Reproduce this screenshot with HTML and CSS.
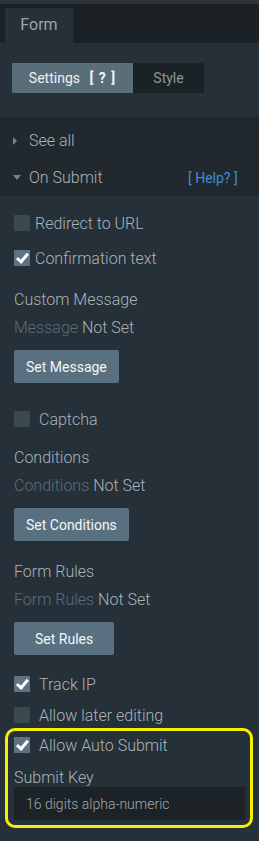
FILE: index.html
```html
<!DOCTYPE HTML>
<html lang="en">
  <head>
    <meta charset="UTF-8">
    <title>Form settings</title>
    <link rel="stylesheet" href="styles.css">
  </head>
  <body>
    <div class="barra-top"></div>
    <div class="tabs">
        <div class="tab">Form</div>
    </div>
    <div class="cabecera">
        <div class="segmento">
            <div class="seg seg-activo">Settings <b class="ayuda">[ ? ]</b></div>
            <div class="seg">Style</div>
        </div>
    </div>
    <div class="arbol">
        <div class="nodo"><span class="flecha-der"></span>See all</div>
        <div class="nodo"><span class="flecha-abajo"></span>On Submit <a class="help">[ Help? ]</a></div>
    </div>
    <div class="contenido">
        <div class="check primero"><span class="caja"></span>Redirect to URL</div>
        <div class="check angosto"><span class="caja marcada"></span>Confirmation text</div>

        <div class="etiqueta sep-1">Custom Message</div>
        <div class="etiqueta"><span class="tenue">Message</span> Not Set</div>
        <button class="boton">Set Message</button>

        <div class="check ancho sep-2"><span class="caja"></span>Captcha</div>

        <div class="etiqueta sep-3">Conditions</div>
        <div class="etiqueta"><span class="tenue">Conditions</span> Not Set</div>
        <button class="boton">Set Conditions</button>

        <div class="etiqueta sep-4">Form Rules</div>
        <div class="etiqueta"><span class="tenue">Form Rules</span> Not Set</div>
        <button class="boton boton-rules">Set Rules</button>

        <div class="check ancho sep-5"><span class="caja marcada"></span>Track IP</div>
        <div class="check ancho"><span class="caja"></span>Allow later editing</div>

        <div class="resaltado">
            <div class="check ancho alto-28"><span class="caja marcada"></span>Allow Auto Submit</div>
            <div class="etiqueta-key">Submit Key</div>
            <input type="text" class="entrada" value="16 digits alpha-numeric">
        </div>
    </div>
  </body>
</html>
```

FILE: styles.css
```css
html, body {
    padding: 0;
    margin: 0;
    border: 0;
    width: 100%;
}

body {
    background-color: #263038;
    font-family: Roboto, "Liberation Sans", sans-serif;
    font-weight: 300;
    color: #aab4ba;
    font-size: 16px;
}

.barra-top {
    height: 4px;
    background-color: #2b343a;
}

.tabs {
    height: 39px;
    background-color: #1b2125;
    display: flex;
    align-items: flex-end;
    padding-left: 5px;
}

.tab {
    width: 68px;
    height: 35px;
    background-color: #263038;
    color: #9aa5ab;
    font-size: 16px;
    font-weight: 400;
    line-height: 33px;
    text-align: center;
}

.cabecera {
    padding: 20px 12px 24px;
}

.segmento {
    display: flex;
    height: 30px;
}

.seg {
    width: 71px;
    background-color: #1b2226;
    color: #8d979d;
    font-size: 14px;
    font-weight: 400;
    line-height: 30px;
    text-align: center;
}

.seg-activo {
    width: 121px;
    background-color: #5a6e7a;
    color: #eef2f4;
}

.ayuda {
    margin-left: 6px;
    letter-spacing: 1px;
}

.arbol {
    background-color: #21292e;
    padding: 5px 0 0;
    height: 74px;
}

.nodo {
    height: 37px;
    display: flex;
    align-items: center;
    padding-left: 13px;
    position: relative;
}

.flecha-der {
    width: 0;
    height: 0;
    border-top: 4px solid transparent;
    border-bottom: 4px solid transparent;
    border-left: 4px solid #76838a;
    margin-right: 12px;
}

.flecha-abajo {
    width: 0;
    height: 0;
    border-left: 4px solid transparent;
    border-right: 4px solid transparent;
    border-top: 5px solid #76838a;
    margin-right: 8px;
}

.help {
    position: absolute;
    left: 188px;
    font-size: 14px;
    font-weight: 400;
    color: #3a8fd6;
}

.contenido {
    padding: 0 6px 0 14px;
}

.check {
    display: flex;
    align-items: center;
    height: 30px;
    gap: 5px;
}

.check.ancho {
    gap: 9px;
}

.check.primero {
    margin-top: 12px;
}

.check.angosto {
    margin-top: 5px;
}

.check.ancho + .check.ancho {
    margin-top: 1px;
}

.caja {
    width: 16px;
    height: 16px;
    background-color: #3b4850;
    position: relative;
    flex: none;
}

.caja.marcada {
    background-color: #5e7381;
}

.caja.marcada::after {
    content: "";
    position: absolute;
    left: 5px;
    top: 1px;
    width: 4px;
    height: 9px;
    border: solid #fff;
    border-width: 0 3px 3px 0;
    transform: rotate(40deg);
}

.etiqueta {
    line-height: 28px;
}

.tenue {
    color: #5b6d78;
}

.sep-1 { margin-top: 13px; }
.sep-2 { margin-top: 21px; }
.sep-3 { margin-top: 10px; }
.sep-4 { margin-top: 17px; }
.sep-5 { margin-top: 14px; }

.boton {
    display: block;
    margin-top: 8px;
    height: 33px;
    padding: 0 12px;
    background-color: #587080;
    color: #f4f7f8;
    font-family: Roboto, "Liberation Sans", sans-serif;
    font-size: 14px;
    border: none;
    border-radius: 2px;
}

.boton-rules {
    padding: 0 21px;
}

.resaltado {
    margin: -2px 0 0 -9px;
    border: 3px solid #f5ef00;
    border-radius: 10px;
    padding: 0 5px 5px 6px;
}

.check.alto-28 {
    height: 28px;
}

.etiqueta-key {
    margin-top: 10px;
    line-height: 18px;
}

.entrada {
    display: block;
    box-sizing: border-box;
    width: 100%;
    height: 33px;
    background-color: #1c2226;
    border: none;
    padding: 0 12px;
    color: #a0aab0;
    font-family: Roboto, "Liberation Sans", sans-serif;
    font-weight: 300;
    font-size: 14px;
}
```
